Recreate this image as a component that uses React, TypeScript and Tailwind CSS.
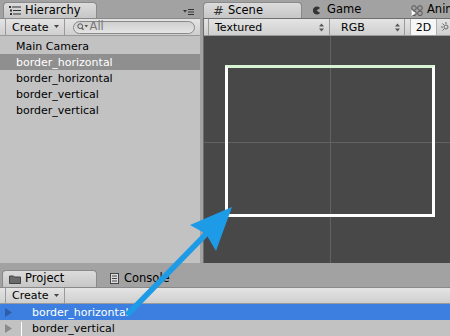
import React from "react";

function HierIcon() {
  return (
    <svg width="12" height="9" viewBox="0 0 12 9" className="shrink-0">
      <rect x="0" y="0" width="2" height="2" fill="#333" />
      <rect x="3" y="0.5" width="9" height="1" fill="#333" />
      <rect x="1" y="3.5" width="2" height="2" fill="#333" />
      <rect x="4" y="4" width="8" height="1" fill="#333" />
      <rect x="1" y="7" width="2" height="2" fill="#333" />
      <rect x="4" y="7.5" width="8" height="1" fill="#333" />
    </svg>
  );
}

function MenuIcon() {
  return (
    <svg width="11" height="6" viewBox="0 0 11 6">
      <polygon points="0,1 4,1 2,3.5" fill="#333" />
      <rect x="5" y="0" width="6" height="1" fill="#333" />
      <rect x="5" y="2.5" width="6" height="1" fill="#333" />
      <rect x="5" y="5" width="6" height="1" fill="#333" />
    </svg>
  );
}

function UpDown() {
  return (
    <svg width="5" height="9" viewBox="0 0 5 9">
      <polygon points="0,3.5 5,3.5 2.5,0.5" fill="#555" />
      <polygon points="0,5.5 5,5.5 2.5,8.5" fill="#555" />
    </svg>
  );
}

function CreateBtn() {
  return (
    <div className="ml-[5px] h-full flex items-center border-l border-r border-[#9a9a9a] pl-[6px] pr-[5px] gap-[5px]">
      <span>Create</span>
      <svg width="5" height="4" viewBox="0 0 5 4">
        <polygon points="0,0 5,0 2.5,3" fill="#444" />
      </svg>
    </div>
  );
}

function Triangle({ color }: { color: string }) {
  return (
    <svg width="7" height="9" viewBox="0 0 7 9" className="shrink-0">
      <polygon points="0,0 7,4.5 0,9" fill={color} />
    </svg>
  );
}

export default function App() {
  return (
    <div className="relative w-[450px] h-[336px] overflow-hidden bg-[#a2a2a2] text-[11px] leading-none text-black font-['DejaVu_Sans',sans-serif]">
      {/* top section */}
      <div className="flex h-[263px]">
        {/* hierarchy */}
        <div className="w-[200px] shrink-0 flex flex-col">
          <div className="h-[18px] flex items-end relative">
            <div className="ml-[3px] w-[94px] h-[16px] rounded-t-[4px] border border-b-0 border-[#8a8a8a] bg-gradient-to-b from-[#dcdcdc] to-[#c6c6c6] flex items-center pl-[5px] gap-[4px] text-[11.5px]">
              <HierIcon />
              <span>Hierarchy</span>
            </div>
            <div className="absolute right-[6px] top-[9px]">
              <MenuIcon />
            </div>
          </div>
          <div className="flex-1 bg-[#c2c2c2] flex flex-col border-t border-[#8a8a8a]">
            <div className="h-[17px] flex items-center bg-gradient-to-b from-[#e4e4e4] to-[#cfcfcf] border-b border-[#9a9a9a]">
              <CreateBtn />
              <div className="ml-[8px] w-[122px] h-[13px] rounded-full border border-[#8a8a8a] bg-gradient-to-b from-[#cfcfcf] to-[#e4e4e4] flex items-center pl-[3px] gap-[1px]">
                <svg width="12" height="8" viewBox="0 0 12 8">
                  <circle cx="3.2" cy="3.2" r="2.4" fill="none" stroke="#555" strokeWidth="1" />
                  <line x1="5" y1="5" x2="6.5" y2="6.8" stroke="#555" strokeWidth="1.2" />
                  <polygon points="7.5,2 11,2 9.25,4.5" fill="#555" />
                </svg>
                <span className="text-[#7a7a7a] text-[11.5px]">All</span>
              </div>
            </div>
            <div className="pt-[2px]">
              <div className="h-[16px] flex items-center pl-[16px]">Main Camera</div>
              <div className="h-[16px] flex items-center pl-[16px] bg-[#8f8f8f] text-white">border_horizontal</div>
              <div className="h-[16px] flex items-center pl-[16px]">border_horizontal</div>
              <div className="h-[16px] flex items-center pl-[16px]">border_vertical</div>
              <div className="h-[16px] flex items-center pl-[16px]">border_vertical</div>
            </div>
          </div>
        </div>
        <div className="w-[3px] shrink-0" />
        {/* scene */}
        <div className="flex-1 min-w-0 overflow-hidden flex flex-col">
          <div className="h-[18px] flex items-end">
            <div className="w-[99px] shrink-0 h-[16px] rounded-t-[4px] border border-b-0 border-[#8a8a8a] bg-gradient-to-b from-[#dcdcdc] to-[#c6c6c6] flex items-center pl-[9px] gap-[4px] text-[11.5px]">
              <span className="text-[13px] text-[#333]">#</span>
              <span>Scene</span>
            </div>
            <div className="h-[16px] w-[99px] shrink-0 flex items-center pl-[10px] gap-[6px] text-[11.5px]">
              <svg width="9" height="9" viewBox="0 0 10 10">
                <path d="M9 2.2 A4.5 4.5 0 1 0 9 7.8 L5 5 Z" fill="#333" />
              </svg>
              <span>Game</span>
            </div>
            <div className="h-[16px] shrink-0 flex items-center pl-[10px] gap-[4px] text-[11.5px]">
              <svg width="12" height="11" viewBox="0 0 12 11">
                <circle cx="3" cy="3" r="2.3" fill="none" stroke="#555" strokeWidth="1" />
                <circle cx="9" cy="3" r="2.3" fill="none" stroke="#555" strokeWidth="1" />
                <circle cx="3" cy="8.3" r="2.3" fill="none" stroke="#555" strokeWidth="1" />
                <circle cx="9" cy="8.3" r="2.3" fill="none" stroke="#555" strokeWidth="1" />
                <polygon points="0.5,5 4.5,8 0.5,11" fill="#fff" />
              </svg>
              <span>Animator</span>
            </div>
          </div>
          <div className="flex-1 flex flex-col border-l border-t border-[#6e6e6e]">
            <div className="h-[17px] shrink-0 flex items-center bg-gradient-to-b from-[#e4e4e4] to-[#cfcfcf] border-b border-[#9a9a9a]">
              <div className="ml-[4px] w-[122px] shrink-0 h-full flex items-center border-l border-r border-[#9a9a9a] pl-[6px] pr-[5px] justify-between">
                <span>Textured</span>
                <UpDown />
              </div>
              <div className="w-[75px] shrink-0 h-full flex items-center border-r border-[#9a9a9a] pl-[11px] pr-[4px] justify-between">
                <span>RGB</span>
                <UpDown />
              </div>
              <div className="ml-[5px] w-[27px] shrink-0 h-full flex items-center justify-center bg-[#f6f6f6] border-l border-r border-[#b0b0b0]">
                2D
              </div>
              <svg width="10" height="10" viewBox="0 0 10 10" className="ml-[4px] shrink-0">
                <circle cx="5" cy="5" r="2" fill="none" stroke="#666" />
                <line x1="5" y1="0" x2="5" y2="2" stroke="#666" />
                <line x1="0" y1="5" x2="2" y2="5" stroke="#666" />
                <line x1="1.5" y1="1.5" x2="3" y2="3" stroke="#666" />
                <line x1="1.5" y1="8.5" x2="3" y2="7" stroke="#666" />
              </svg>
            </div>
            <div className="flex-1 relative bg-[#484848] overflow-hidden">
              <div className="absolute left-[126px] top-0 bottom-0 w-px bg-[#626262]" />
              <div className="absolute top-[106px] left-0 right-0 h-px bg-[#626262]" />
              <div className="absolute left-[21px] top-[29px] w-[210px] h-[152px] border-[3px] border-white border-t-[#d6f3d2]" />
            </div>
          </div>
        </div>
      </div>
      {/* bottom section */}
      <div className="h-[24px] flex items-end">
        <div className="ml-[2px] w-[95px] h-[17px] rounded-t-[4px] border border-b-0 border-[#8a8a8a] bg-gradient-to-b from-[#dcdcdc] to-[#c6c6c6] flex items-center pl-[6px] gap-[4px] text-[11.5px]">
          <svg width="12" height="9" viewBox="0 0 12 9">
            <path d="M0.5 1 H4.5 L5.5 2 H11.5 V8.5 H0.5 Z" fill="#6a6a6a" stroke="#444" strokeWidth="1" />
          </svg>
          <span>Project</span>
        </div>
        <div className="h-[17px] flex items-center pl-[13px] gap-[5px] text-[11.5px]">
          <svg width="9" height="11" viewBox="0 0 9 11">
            <rect x="0.5" y="0.5" width="8" height="10" fill="#ddd" stroke="#444" />
            <line x1="2" y1="3" x2="7" y2="3" stroke="#444" />
            <line x1="2" y1="5.5" x2="7" y2="5.5" stroke="#444" />
            <line x1="2" y1="8" x2="7" y2="8" stroke="#444" />
          </svg>
          <span>Console</span>
        </div>
      </div>
      <div className="bg-[#c2c2c2] border-t border-[#8a8a8a]">
        <div className="h-[16px] flex items-center bg-gradient-to-b from-[#e4e4e4] to-[#cfcfcf] border-b border-[#9a9a9a]">
          <CreateBtn />
        </div>
        <div className="h-[16px] flex items-center bg-[#3d7fe0] text-white">
          <div className="w-[32px] pl-[5px] flex items-center">
            <Triangle color="#2d5da8" />
          </div>
          <span>border_horizontal</span>
        </div>
        <div className="h-[16px] flex items-center relative">
          <div className="w-[32px] pl-[5px] flex items-center">
            <Triangle color="#8a8a8a" />
          </div>
          <span>border_vertical</span>
          <div className="absolute left-[21px] top-[2px] bottom-0 w-px bg-white" />
        </div>
      </div>
      {/* arrow overlay */}
      <svg className="absolute inset-0 pointer-events-none" width="450" height="336" viewBox="0 0 450 336">
        <line x1="127" y1="315" x2="210" y2="230" stroke="#1d9be6" strokeWidth="5.5" />
        <polygon points="232,207 190,225 206,234 216,251" fill="#1d9be6" />
      </svg>
    </div>
  );
}
